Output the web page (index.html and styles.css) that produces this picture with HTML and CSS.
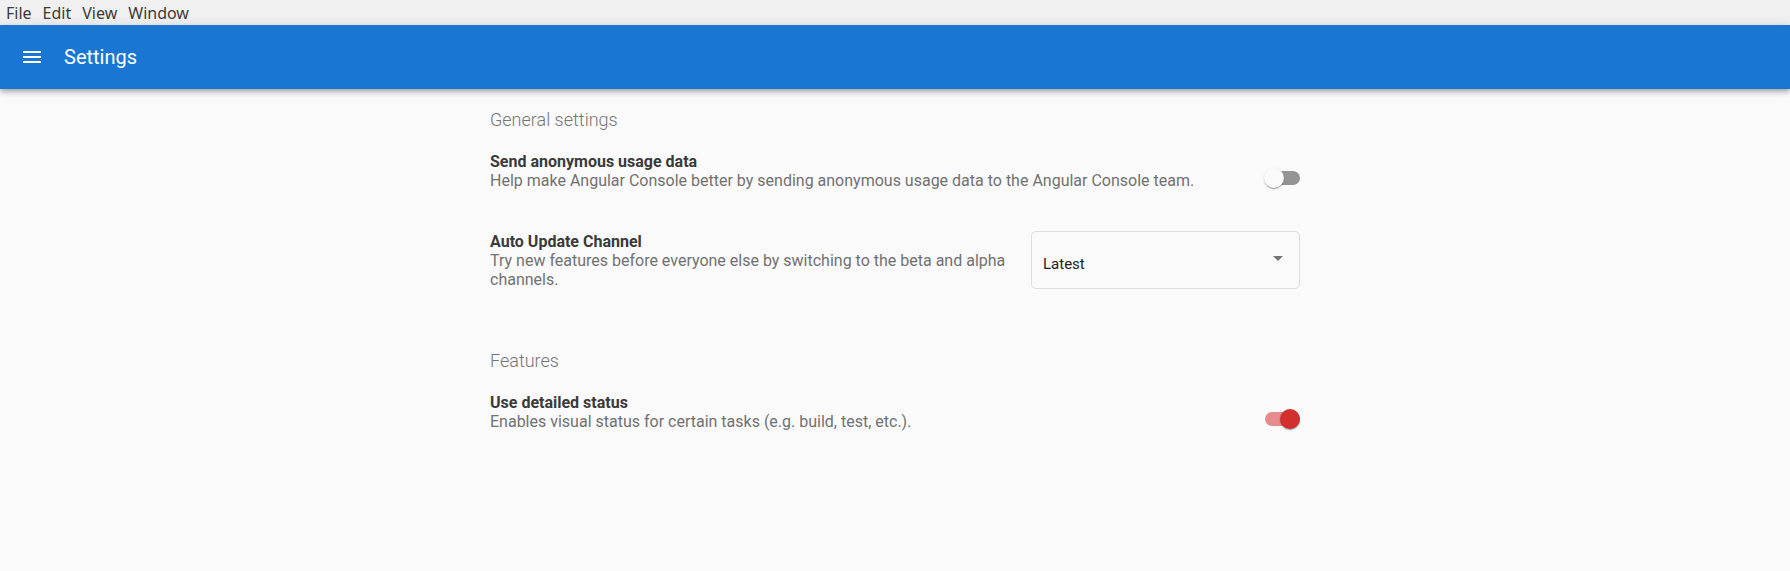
FILE: index.html
```html
<!DOCTYPE html>
<html lang="en">
<head>
<meta charset="utf-8">
<title>Settings</title>
<link rel="stylesheet" href="styles.css">
</head>
<body>
<nav class="menubar">
  <span class="menu-item">File</span>
  <span class="menu-item">Edit</span>
  <span class="menu-item">View</span>
  <span class="menu-item">Window</span>
</nav>
<header class="toolbar">
  <svg class="menu-icon" viewBox="0 0 24 24" width="24" height="24" aria-hidden="true">
    <path d="M3 18h18v-2H3v2zm0-5h18v-2H3v2zm0-7v2h18V6H3z" fill="#fff"/>
  </svg>
  <span class="toolbar-title">Settings</span>
</header>
<main class="content">
  <section class="group">
    <h2 class="group-title">General settings</h2>
    <div class="setting-row">
      <div class="setting-text">
        <div class="setting-title">Send anonymous usage data</div>
        <div class="setting-desc">Help make Angular Console better by sending anonymous usage data to the Angular Console team.</div>
      </div>
      <div class="toggle">
        <span class="toggle-track"></span>
        <span class="toggle-thumb"></span>
      </div>
    </div>
    <div class="setting-row">
      <div class="setting-text">
        <div class="setting-title">Auto Update Channel</div>
        <div class="setting-desc">Try new features before everyone else by switching to the beta and alpha channels.</div>
      </div>
      <div class="select">
        <span class="select-value">Latest</span>
        <span class="select-arrow"></span>
      </div>
    </div>
  </section>
  <section class="group">
    <h2 class="group-title">Features</h2>
    <div class="setting-row">
      <div class="setting-text">
        <div class="setting-title">Use detailed status</div>
        <div class="setting-desc">Enables visual status for certain tasks (e.g. build, test, etc.).</div>
      </div>
      <div class="toggle toggle-on">
        <span class="toggle-track"></span>
        <span class="toggle-thumb"></span>
      </div>
    </div>
  </section>
</main>
</body>
</html>
```
FILE: styles.css
```css
html, body {
  margin: 0;
  padding: 0;
}
body {
  background: #fafafa;
  font-family: Roboto, "Liberation Sans", sans-serif;
  height: 571px;
  overflow: hidden;
}
.menubar {
  height: 25px;
  background: #f0f0f0;
  display: flex;
  align-items: center;
  padding-left: 0.5px;
  font-family: "Noto Sans", "DejaVu Sans", sans-serif;
  font-size: 16px;
  color: #3c3b37;
}
.menu-item {
  padding: 0 5.5px;
}
.toolbar {
  position: relative;
  z-index: 2;
  height: 64px;
  background: #1976d2;
  display: flex;
  align-items: center;
  padding-left: 20px;
  gap: 20px;
  box-shadow: 0 2px 4px -1px rgba(0,0,0,.2), 0 4px 5px 0 rgba(0,0,0,.14), 0 1px 10px 0 rgba(0,0,0,.12);
}
.menu-icon {
  display: block;
}
.toolbar-title {
  color: #fff;
  font-size: 20px;
  font-weight: 400;
}
.content {
  width: 810px;
  margin: 0 auto;
  padding-top: 18.5px;
}
.group + .group {
  margin-top: 59.5px;
}
.group-title {
  margin: 0 0 20.5px;
  font-size: 18px;
  line-height: 24px;
  font-weight: 300;
  color: #757575;
}
.setting-row {
  display: flex;
  align-items: center;
}
.setting-row + .setting-row {
  margin-top: 41px;
}
.setting-text {
  flex: 1;
  min-width: 0;
  padding-right: 16px;
}
.setting-title {
  font-size: 16px;
  line-height: 19px;
  font-weight: 700;
  color: #3a3a3a;
}
.setting-desc {
  font-size: 16px;
  line-height: 19px;
  color: #717171;
}
.toggle {
  position: relative;
  width: 36px;
  height: 20px;
  margin-top: 14px;
  flex: none;
}
.toggle-track {
  position: absolute;
  left: 1px;
  top: 3px;
  width: 35px;
  height: 14px;
  border-radius: 7px;
  background: #949494;
}
.toggle-thumb {
  position: absolute;
  left: 0;
  top: 0;
  width: 20px;
  height: 20px;
  border-radius: 50%;
  background: #fafafa;
  box-shadow: 0 2px 1px -1px rgba(0,0,0,.2), 0 1px 1px 0 rgba(0,0,0,.14), 0 1px 3px 0 rgba(0,0,0,.12);
}
.toggle-on .toggle-track {
  background: rgba(211, 47, 47, .54);
}
.toggle-on .toggle-thumb {
  left: 16px;
  background: #d32f2f;
}
.select {
  flex: none;
  box-sizing: border-box;
  width: 269px;
  height: 58px;
  border: 1px solid #dedede;
  border-radius: 5px;
  display: flex;
  align-items: center;
  padding: 8px 16px 0 11px;
}
.select-value {
  flex: 1;
  font-size: 15px;
  color: #212121;
}
.select-arrow {
  width: 0;
  height: 0;
  border-left: 5px solid transparent;
  border-right: 5px solid transparent;
  border-top: 5px solid #757575;
  margin-bottom: 12px;
}
```
